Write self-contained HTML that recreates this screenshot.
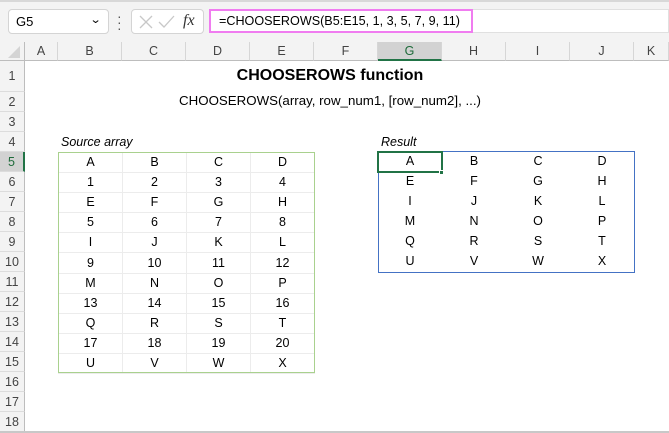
<!DOCTYPE html>
<html><head><meta charset="utf-8"><style>
*{margin:0;padding:0;box-sizing:border-box}
body{width:669px;height:433px;overflow:hidden;background:#fff;font-family:"Liberation Sans",Arial,sans-serif;position:relative;font-size:12.5px;color:#000}
.a{position:absolute}
.top{left:0;top:0;width:669px;height:61px;background:#f3f3f3;border-top:2px solid #d8d8d8}
.box{background:#fff;border:1px solid #d4d4d4;border-radius:4px}
.ch{top:42px;height:19px;border-right:1px solid #d6d6d6;text-align:center;line-height:19px;color:#444;font-size:12.5px;border-bottom:1px solid #bdbdbd}
.rh{left:0;width:25px;height:20px;background:#f3f3f3;border-bottom:1px solid #dcdcdc;border-right:1px solid #bdbdbd;text-align:center;line-height:20px;color:#444;font-size:12.5px}
table{border-collapse:collapse;position:absolute;table-layout:fixed}
td{width:64px;height:20.1px;text-align:center;padding:0;font-size:12.5px;line-height:19px}
.src{left:58px;top:152px}
.src td{border:1px solid #ececec}
.res{left:378px;top:151px}
</style></head><body>
<div class="a top"></div>
<div class="a box" style="left:8px;top:9px;width:101px;height:25px;line-height:23px;padding-left:7px;font-size:13px">G5<span style="position:absolute;right:8px;top:-1px;font-size:11px;transform:scaleX(1.3)">&#8964;</span></div>
<div class="a" style="left:117px;top:13px;color:#555;font-size:14px;line-height:6px;width:3px;text-align:center">·<br>·<br>·</div>
<div class="a box" style="left:131px;top:9px;width:73px;height:25px">
<svg width="73" height="25" style="position:absolute;left:0;top:0"><path d="M8 6l12 12M20 6L8 18" stroke="#c8c8c8" stroke-width="1.3" fill="none"/><path d="M27 12l5 5 10-11" stroke="#c8c8c8" stroke-width="1.3" fill="none"/></svg>
<span style="position:absolute;left:51px;top:2px;font-family:'Liberation Serif',serif;font-style:italic;font-size:16px;color:#333">fx</span></div>
<div class="a" style="left:473px;top:9px;width:196px;height:24px;background:#fff;border:1px solid #e0e0e0;border-left:none"></div>
<div class="a" style="left:209px;top:9px;width:264px;height:24px;background:#fff;border:2px solid #f07cf0;line-height:20px;padding-left:8px;font-size:12.6px;white-space:nowrap;overflow:hidden">=CHOOSEROWS(B5:E15, 1, 3, 5, 7, 9, 11)</div>
<div class="a" style="left:0;top:42px;width:25px;height:19px;border-right:1px solid #bdbdbd;border-bottom:1px solid #bdbdbd"><svg width="24" height="18"><path d="M20 4L20 16L8 16Z" fill="#d4d4d4"/></svg></div>
<div class="a ch" style="left:25px;width:33px">A</div>
<div class="a ch" style="left:58px;width:64px">B</div>
<div class="a ch" style="left:122px;width:64px">C</div>
<div class="a ch" style="left:186px;width:64px">D</div>
<div class="a ch" style="left:250px;width:64px">E</div>
<div class="a ch" style="left:314px;width:64px">F</div>
<div class="a ch" style="left:378px;width:64px;background:#d2d2d2;color:#1e6b3a;border-bottom:2px solid #217346">G</div>
<div class="a ch" style="left:442px;width:64px">H</div>
<div class="a ch" style="left:506px;width:64px">I</div>
<div class="a ch" style="left:570px;width:64px">J</div>
<div class="a ch" style="left:634px;width:35px">K</div>
<div class="a rh" style="top:61px;height:31px;line-height:31px">1</div>
<div class="a rh" style="top:92px">2</div>
<div class="a rh" style="top:112px">3</div>
<div class="a rh" style="top:132px">4</div>
<div class="a rh" style="top:152px;background:#d2d2d2;color:#1e6b3a;border-right:2px solid #217346">5</div>
<div class="a rh" style="top:172px">6</div>
<div class="a rh" style="top:192px">7</div>
<div class="a rh" style="top:212px">8</div>
<div class="a rh" style="top:232px">9</div>
<div class="a rh" style="top:252px">10</div>
<div class="a rh" style="top:272px">11</div>
<div class="a rh" style="top:292px">12</div>
<div class="a rh" style="top:312px">13</div>
<div class="a rh" style="top:332px">14</div>
<div class="a rh" style="top:352px">15</div>
<div class="a rh" style="top:372px">16</div>
<div class="a rh" style="top:392px">17</div>
<div class="a rh" style="top:412px;height:21px">18</div>
<div class="a" style="left:0;top:431px;width:669px;height:2px;background:#c8c8c8"></div>
<div class="a" style="left:25px;top:67px;width:610px;text-align:center;font-weight:bold;font-size:16px">CHOOSEROWS function</div>
<div class="a" style="left:25px;top:93px;width:610px;text-align:center;font-size:13.3px">CHOOSEROWS(array, row_num1, [row_num2], ...)</div>
<div class="a" style="left:61px;top:135px;font-style:italic">Source array</div>
<div class="a" style="left:381px;top:135px;font-style:italic">Result</div>
<table class="src">
<tr><td>A</td><td>B</td><td>C</td><td>D</td></tr>
<tr><td>1</td><td>2</td><td>3</td><td>4</td></tr>
<tr><td>E</td><td>F</td><td>G</td><td>H</td></tr>
<tr><td>5</td><td>6</td><td>7</td><td>8</td></tr>
<tr><td>I</td><td>J</td><td>K</td><td>L</td></tr>
<tr><td>9</td><td>10</td><td>11</td><td>12</td></tr>
<tr><td>M</td><td>N</td><td>O</td><td>P</td></tr>
<tr><td>13</td><td>14</td><td>15</td><td>16</td></tr>
<tr><td>Q</td><td>R</td><td>S</td><td>T</td></tr>
<tr><td>17</td><td>18</td><td>19</td><td>20</td></tr>
<tr><td>U</td><td>V</td><td>W</td><td>X</td></tr>
</table>
<div class="a" style="left:58px;top:152px;width:257px;height:221px;border:1px solid #a9d18e"></div>
<table class="res">
<tr><td>A</td><td>B</td><td>C</td><td>D</td></tr>
<tr><td>E</td><td>F</td><td>G</td><td>H</td></tr>
<tr><td>I</td><td>J</td><td>K</td><td>L</td></tr>
<tr><td>M</td><td>N</td><td>O</td><td>P</td></tr>
<tr><td>Q</td><td>R</td><td>S</td><td>T</td></tr>
<tr><td>U</td><td>V</td><td>W</td><td>X</td></tr>
</table>
<div class="a" style="left:378px;top:151px;width:257px;height:122px;border:1px solid #4472c4"></div>
<div class="a" style="left:377px;top:151px;width:66px;height:22px;border:2px solid #217346"></div>
<div class="a" style="left:439px;top:170px;width:5px;height:5px;background:#217346;border:1px solid #fff"></div>
</body></html>
